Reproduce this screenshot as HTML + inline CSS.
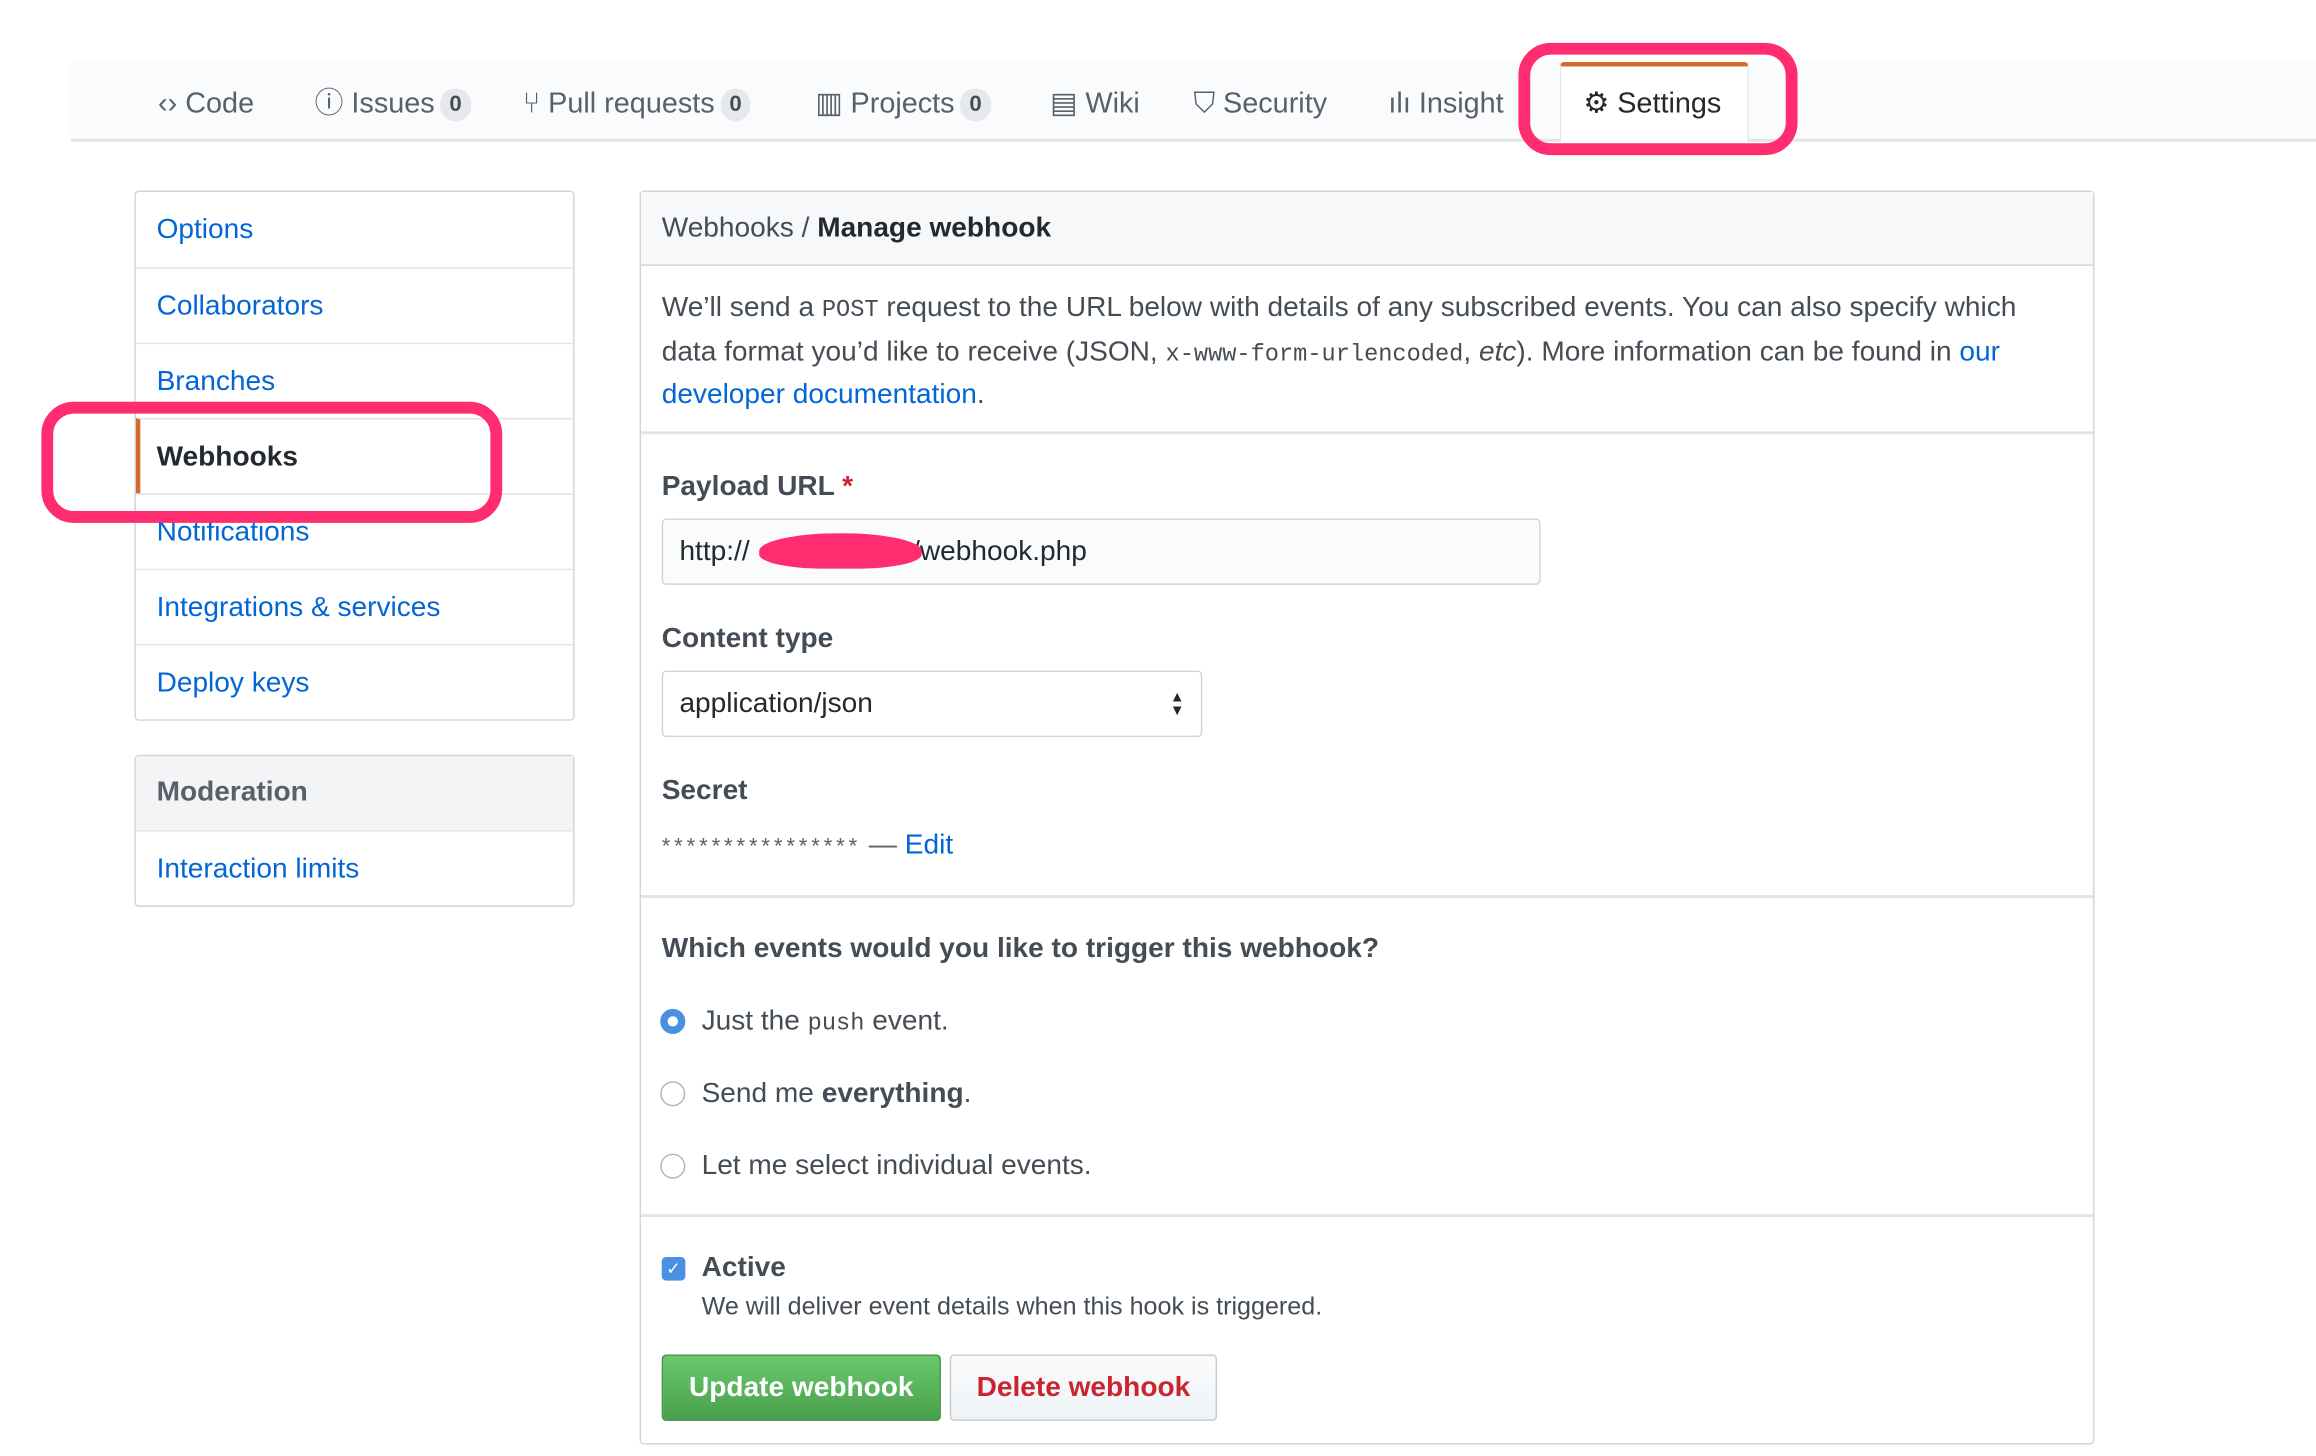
<!DOCTYPE html>
<html><head><meta charset="utf-8"><style>
html,body{margin:0;padding:0;background:#fff;width:2316px;height:1456px;overflow:hidden}
#w{position:absolute;left:0;top:0;width:1568px;height:986px;transform:scale(1.47704);transform-origin:0 0;font-family:"Liberation Sans",sans-serif;color:#24292e;font-size:19px}
.a{position:absolute}
.tabbar{left:48px;top:42px;width:1520px;height:52px;background:#fafbfc;border-bottom:2px solid #e1e4e8}
.tab{position:absolute;top:58px;font-size:19.5px;color:#586069;white-space:nowrap;line-height:24px}
.cnt{display:inline-block;background:#e6e8eb;border-radius:10px;font-size:15px;padding:0 6px;line-height:22px;color:#444d56;font-weight:bold;margin-left:4px;vertical-align:1px}
.side{left:91px;width:296px;border:1px solid #d1d5da;border-radius:3px;background:#fff}
.it{height:51px;border-top:1px solid #e1e4e8;line-height:51px;padding-left:14px;color:#0366d6;font-size:19px;box-sizing:border-box}
.it:first-child{border-top:none}
.box{left:433px;top:129px;width:983px;height:847px;border:1px solid #d1d5da;border-radius:3px}
.lbl{font-weight:bold;color:#444d56;font-size:19px}
.hr{left:0;width:983px;height:0;border-top:2px solid #e1e4e8}
.radio{position:absolute;left:13px;width:17px;height:17px;border-radius:50%;border:1px solid #b0b5bb;box-sizing:border-box;background:#fff}
.mono{font-family:"Liberation Mono",monospace;font-size:16px}
</style></head><body><div id="w">
<div class="a tabbar"></div>
<div class="tab" style="left:107px">‹› Code</div>
<div class="tab" style="left:213px">ⓘ Issues<span class="cnt">0</span></div>
<div class="tab" style="left:354px">⑂ Pull requests<span class="cnt">0</span></div>
<div class="tab" style="left:552px">▥ Projects<span class="cnt">0</span></div>
<div class="tab" style="left:711px">▤ Wiki</div>
<div class="tab" style="left:808px">⛉ Security</div>
<div class="tab" style="left:940px">ılı Insight</div>
<div class="a" style="left:1056px;top:42px;width:128px;height:54px;background:#fff;border:1px solid #e1e4e8;border-top:3px solid #d26b2b;border-bottom:none;box-sizing:border-box;border-radius:3px 3px 0 0"></div>
<div class="tab" style="left:1072px;color:#24292e">⚙ Settings</div>
<div class="a" style="left:1028px;top:29px;width:189px;height:76px;border:8px solid #ff2d6f;border-radius:22px;box-sizing:border-box"></div>

<div class="a side" style="top:129px">
<div class="it">Options</div><div class="it">Collaborators</div><div class="it">Branches</div>
<div class="it" style="color:#24292e;font-weight:bold;border-left:3px solid #d26b2b;padding-left:11px">Webhooks</div>
<div class="it">Notifications</div><div class="it">Integrations &amp; services</div><div class="it">Deploy keys</div>
</div>
<div class="a side" style="top:511px">
<div class="it" style="background:#f3f4f6;color:#586069;font-weight:bold;height:50px;line-height:50px">Moderation</div>
<div class="it">Interaction limits</div>
</div>
<div class="a" style="left:28px;top:272px;width:312px;height:82px;border:8px solid #ff2d6f;border-radius:22px;box-sizing:border-box"></div>

<div class="a box">
<div class="a" style="left:0;top:0;width:983px;height:49px;background:#f6f8fa;border-bottom:1px solid #d1d5da"></div>
<div class="a" style="left:14px;top:14px;color:#444d56">Webhooks / <b style="color:#24292e">Manage webhook</b></div>
<div class="a" style="left:14px;top:65px;width:945px;line-height:28.5px;color:#444d56">We’ll send a <span class="mono">POST</span> request to the URL below with details of any subscribed events. You can also specify which data format you’d like to receive (JSON, <span class="mono">x-www-form-urlencoded</span>, <i>etc</i>). More information can be found in <span style="color:#0366d6">our developer documentation</span>.</div>
<div class="a hr" style="top:162px"></div>
<div class="a lbl" style="left:14px;top:189px">Payload URL <span style="color:#cb2431">*</span></div>
<div class="a" style="left:14px;top:221px;width:595px;height:45px;border:1px solid #d1d5da;border-radius:3px;background:#fafbfc;box-sizing:border-box"></div>
<div class="a" style="left:26px;top:233px">http://<span style="display:inline-block;width:110px"></span>/webhook.php</div>
<div class="a" style="left:80px;top:231px;width:110px;height:24px;background:#ff2d6f;border-radius:50% 50% 40% 40%"></div>
<div class="a lbl" style="left:14px;top:292px">Content type</div>
<div class="a" style="left:14px;top:324px;width:366px;height:45px;border:1px solid #d1d5da;border-radius:3px;background:#fff;box-sizing:border-box"></div>
<div class="a" style="left:26px;top:336px">application/json</div>
<div class="a" style="left:358px;top:338px;font-size:10px;line-height:9px">▲<br>▼</div>
<div class="a lbl" style="left:14px;top:395px">Secret</div>
<div class="a" style="left:14px;top:432px;color:#586069"><span style="font-size:15px;letter-spacing:2.6px">****************</span> — <span style="color:#0366d6">Edit</span></div>
<div class="a hr" style="top:476px"></div>
<div class="a lbl" style="left:14px;top:502px">Which events would you like to trigger this webhook?</div>
<div class="radio" style="top:553px;border:5px solid #4a90e2"></div>
<div class="a" style="left:41px;top:551px;color:#444d56">Just the <span class="mono">push</span> event.</div>
<div class="radio" style="top:602px"></div>
<div class="a" style="left:41px;top:600px;color:#444d56">Send me <b>everything</b>.</div>
<div class="radio" style="top:651px"></div>
<div class="a" style="left:41px;top:649px;color:#444d56">Let me select individual events.</div>
<div class="a hr" style="top:692px"></div>
<div class="a" style="left:14px;top:721px;width:16px;height:16px;background:#4a90e2;border-radius:3px;color:#fff;font-size:12px;line-height:16px;text-align:center">✓</div>
<div class="a lbl" style="left:41px;top:718px">Active</div>
<div class="a" style="left:41px;top:745px;font-size:17px;color:#444d56">We will deliver event details when this hook is triggered.</div>
<div class="a" style="left:14px;top:787px;width:189px;height:45px;background:linear-gradient(#69c96b,#4aa04c);border:1px solid #3f8f41;border-radius:3px;box-sizing:border-box;color:#fff;font-weight:bold;text-align:center;line-height:43px">Update webhook</div>
<div class="a" style="left:209px;top:787px;width:181px;height:45px;background:linear-gradient(#fafbfc,#eff3f6);border:1px solid #c8ccd1;border-radius:3px;box-sizing:border-box;color:#cb2431;font-weight:bold;text-align:center;line-height:43px">Delete webhook</div>
</div>
</div></body></html>
